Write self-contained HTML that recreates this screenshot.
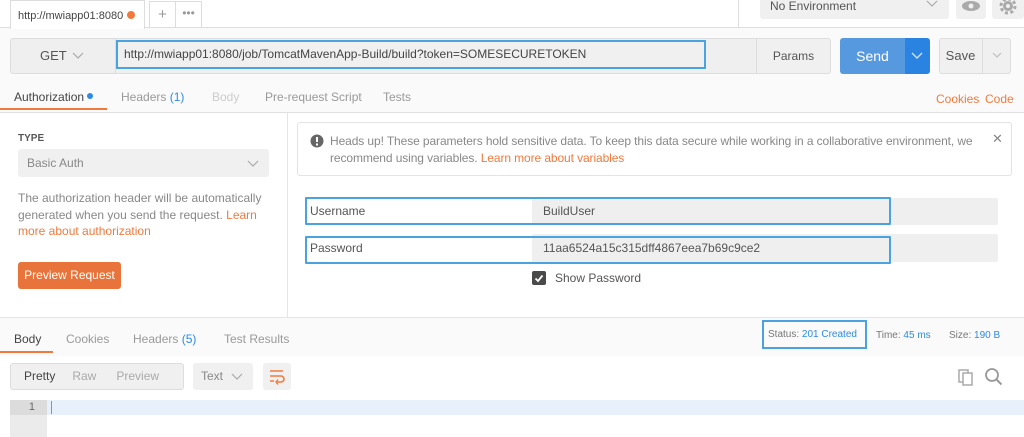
<!DOCTYPE html>
<html><head><style>
*{box-sizing:border-box;margin:0;padding:0}
body{width:1024px;height:437px;overflow:hidden;background:#fafafa;font-family:"Liberation Sans",sans-serif;font-size:12px;color:#505050;position:relative}
.a{position:absolute}
.or{color:#f07a3e}
.bl{color:#2e8ae6}
.chev{position:absolute}
</style></head><body>
<!-- top bar -->
<div class="a" style="left:0;top:0;width:1024px;height:28px;background:#fff;border-bottom:1px solid #ddd"></div>
<div class="a" style="left:10px;top:0;width:135px;height:29px;background:#fff;border:1px solid #ddd;border-bottom:none;font-size:11px;padding:9px 0 0 7px;color:#444">http://mwiapp01:8080</div>
<div class="a" style="left:127px;top:11px;width:8px;height:8px;border-radius:50%;background:#f07a3e;box-shadow:0 0 0 3px #fff"></div>
<div class="a" style="left:149px;top:1px;width:27px;height:27px;border:1px solid #ddd;text-align:center;line-height:26px;color:#999;font-size:15px">+</div>
<div class="a" style="left:175px;top:1px;width:27px;height:27px;border:1px solid #ddd;text-align:center;line-height:22px;color:#999;font-size:12px">•••</div>
<div class="a" style="left:738px;top:0;width:1px;height:28px;background:#ddd"></div>
<div class="a" style="left:760px;top:0;width:189px;height:19px;background:#f0f0f0;border-radius:0 0 3px 3px;padding:0 0 0 10px;font-size:12px;line-height:12px;color:#555">No Environment</div>
<svg class="chev" style="left:926px;top:0" width="12" height="8"><path d="M1 1l5 5 5-5" stroke="#aaa" stroke-width="1.2" fill="none"/></svg>
<div class="a" style="left:956px;top:0;width:30px;height:19px;background:#f0f0f0;border-radius:0 0 3px 3px"><svg width="30" height="14"><ellipse cx="15" cy="6" rx="9" ry="5" fill="#aaa"/><circle cx="15" cy="6" r="2.5" fill="#f0f0f0"/></svg></div>
<div class="a" style="left:992px;top:0;width:32px;height:19px;background:#f0f0f0;border-radius:0 0 3px 3px"><svg width="32" height="16"><circle cx="16" cy="6" r="7" fill="none" stroke="#aaa" stroke-width="3" stroke-dasharray="3 2.5"/><circle cx="16" cy="6" r="5" fill="#aaa"/><circle cx="16" cy="6" r="2" fill="#f0f0f0"/></svg></div>
<!-- request row -->
<div class="a" style="left:10px;top:38px;width:748px;height:36px;background:#efefef;border:1px solid #ddd;border-radius:3px"></div>
<div class="a" style="left:10px;top:38px;width:106px;height:36px;border-right:1px solid #ddd;font-size:13px;line-height:36px;padding-left:30px;color:#555">GET</div>
<svg class="chev" style="left:72px;top:52px" width="12" height="8"><path d="M1 1l5 5 5-5" stroke="#aaa" stroke-width="1.2" fill="none"/></svg>
<div class="a" style="left:116px;top:40px;width:590px;height:29px;border:2px solid #4aa3df;background:#f0f0f0;font-size:12px;line-height:25px;padding-left:6px;color:#444">http://mwiapp01:8080/job/TomcatMavenApp-Build/build?token=SOMESECURETOKEN</div>
<div class="a" style="left:756px;top:38px;width:75px;height:36px;background:#f0f0f0;border:1px solid #ddd;border-radius:0 3px 3px 0;text-align:center;line-height:34px;color:#555">Params</div>
<div class="a" style="left:840px;top:38px;width:65px;height:36px;background:#5799df;border-radius:3px 0 0 3px;color:#fff;font-size:14px;text-align:center;line-height:36px">Send</div>
<div class="a" style="left:905px;top:38px;width:25px;height:36px;background:#2a83e0;border-radius:0 3px 3px 0"></div>
<svg class="chev" style="left:911px;top:52px" width="12" height="8"><path d="M1 1l5 5 5-5" stroke="#cfe3f8" stroke-width="1.4" fill="none"/></svg>
<div class="a" style="left:939px;top:38px;width:72px;height:36px;background:#f0f0f0;border:1px solid #ddd;border-radius:3px"></div>
<div class="a" style="left:939px;top:38px;width:44px;height:36px;border-right:1px solid #ddd;text-align:center;line-height:36px;font-size:13px;color:#555">Save</div>
<svg class="chev" style="left:992px;top:52px" width="10" height="7"><path d="M1 1l4 4 4-4" stroke="#bbb" stroke-width="1.1" fill="none"/></svg>
<!-- tabs -->
<div class="a" style="left:14px;top:90px;color:#444">Authorization <span style="display:inline-block;width:6px;height:6px;border-radius:50%;background:#2e8ae6;vertical-align:2px"></span></div>
<div class="a" style="left:0;top:108px;width:107px;height:2px;background:#f07a3e"></div>
<div class="a" style="left:121px;top:90px;color:#999">Headers <span class="bl">(1)</span></div>
<div class="a" style="left:212px;top:90px;color:#ccc">Body</div>
<div class="a" style="left:265px;top:90px;color:#999">Pre-request Script</div>
<div class="a" style="left:383px;top:90px;color:#999">Tests</div>
<div class="a or" style="left:936px;top:92px">Cookies</div>
<div class="a or" style="left:985px;top:92px">Code</div>
<div class="a" style="left:0;top:112px;width:1024px;height:1px;background:#e0e0e0"></div>
<!-- auth panes -->
<div class="a" style="left:0;top:113px;width:1024px;height:204px;background:#fff"></div>
<div class="a" style="left:287px;top:113px;width:1px;height:204px;background:#e5e5e5"></div>
<div class="a" style="left:18px;top:133px;font-size:10px;font-weight:bold;color:#555">TYPE</div>
<div class="a" style="left:18px;top:149px;width:251px;height:28px;background:#f0f0f0;border-radius:3px;line-height:28px;padding-left:9px;color:#888">Basic Auth</div>
<svg class="chev" style="left:247px;top:160px" width="12" height="8"><path d="M1 1l5 5 5-5" stroke="#aaa" stroke-width="1.2" fill="none"/></svg>
<div class="a" style="left:18px;top:190px;width:250px;line-height:16.5px;color:#888">The authorization header will be automatically generated when you send the request. <span class="or">Learn more about authorization</span></div>
<div class="a" style="left:18px;top:262px;width:103px;height:27px;background:#e8743b;border-radius:3px;color:#fff;text-align:center;line-height:27px">Preview Request</div>
<div class="a" style="left:297px;top:122px;width:715px;height:54px;border:1px solid #e3e3e3;border-radius:3px"></div>
<svg class="a" style="left:310px;top:134px" width="14" height="14"><circle cx="7" cy="7" r="6.5" fill="#666"/><rect x="6" y="3" width="2" height="5" fill="#fff"/><rect x="6" y="9.5" width="2" height="2" fill="#fff"/></svg>
<div class="a" style="left:330px;top:133px;width:660px;line-height:16.5px;color:#888;letter-spacing:-0.1px">Heads up! These parameters hold sensitive data. To keep this data secure while working in a collaborative environment, we recommend using variables. <span class="or">Learn more about variables</span></div>
<div class="a" style="left:992px;top:131px;color:#888;font-size:13px">✕</div>
<div class="a" style="left:532px;top:198px;width:466px;height:27px;background:#efefef;border-radius:2px"></div>
<div class="a" style="left:305px;top:197px;width:586px;height:28px;border:2px solid #4aa3df;border-radius:1px"></div>
<div class="a" style="left:532px;top:199px;width:357px;height:24px;background:#efefef"></div>
<div class="a" style="left:310px;top:204px;color:#555">Username</div>
<div class="a" style="left:543px;top:204px;color:#555">BuildUser</div>
<div class="a" style="left:532px;top:234px;width:466px;height:28px;background:#efefef;border-radius:2px"></div>
<div class="a" style="left:305px;top:236px;width:586px;height:28px;border:2px solid #4aa3df;border-radius:1px"></div>
<div class="a" style="left:532px;top:238px;width:357px;height:24px;background:#efefef"></div>
<div class="a" style="left:310px;top:241px;color:#555">Password</div>
<div class="a" style="left:543px;top:241px;color:#555">11aa6524a15c315dff4867eea7b69c9ce2</div>
<div class="a" style="left:532px;top:271px;width:14px;height:14px;background:#4a4a4a;border-radius:2px"><svg width="14" height="14"><path d="M3.5 7.5 L6 10 L10.5 4.5" stroke="#fff" stroke-width="1.8" fill="none"/></svg></div>
<div class="a" style="left:555px;top:271px;color:#555">Show Password</div>
<div class="a" style="left:0;top:317px;width:1024px;height:1px;background:#e5e5e5"></div>
<!-- response -->
<div class="a" style="left:14px;top:332px;color:#444">Body</div>
<div class="a" style="left:0;top:351px;width:53px;height:2px;background:#f07a3e"></div>
<div class="a" style="left:66px;top:332px;color:#999">Cookies</div>
<div class="a" style="left:133px;top:332px;color:#999">Headers <span class="bl">(5)</span></div>
<div class="a" style="left:224px;top:332px;color:#999">Test Results</div>
<div class="a" style="left:762px;top:320px;width:105px;height:29px;border:2px solid #4aa3df;font-size:10px;line-height:25px;padding-left:4px;color:#777">Status: <span class="bl">201 Created</span></div>
<div class="a" style="left:876px;top:330px;font-size:10px;color:#777">Time: <span class="bl">45 ms</span></div>
<div class="a" style="left:949px;top:330px;font-size:10px;color:#777">Size: <span class="bl">190 B</span></div>
<div class="a" style="left:0;top:356px;width:1024px;height:81px;background:#fff"></div>
<div class="a" style="left:10px;top:363px;width:174px;height:27px;background:#f0f0f0;border:1px solid #ddd;border-radius:3px;line-height:25px;color:#aaa"><span style="color:#444;margin-left:13px">Pretty</span><span style="margin-left:17px">Raw</span><span style="margin-left:20px">Preview</span></div>
<div class="a" style="left:193px;top:363px;width:60px;height:27px;background:#f0f0f0;border-radius:3px;line-height:27px;padding-left:8px;color:#888">Text</div>
<svg class="chev" style="left:231px;top:373px" width="12" height="8"><path d="M1 1l5 5 5-5" stroke="#aaa" stroke-width="1.2" fill="none"/></svg>
<div class="a" style="left:263px;top:363px;width:28px;height:27px;background:#f0f0f0;border-radius:3px"><svg width="28" height="27"><path d="M7 8h13M7 13h11a3 3 0 0 1 0 6h-4M7 18h4" stroke="#f07a3e" stroke-width="1.6" fill="none"/><path d="M15 16.5l-2 2.5 2 2.5" stroke="#f07a3e" stroke-width="1.4" fill="none"/></svg></div>
<svg class="a" style="left:957px;top:368px" width="20" height="20"><rect x="2" y="2" width="9" height="12" fill="none" stroke="#aaa" stroke-width="1.5"/><rect x="6" y="5" width="9" height="12" fill="#fff" stroke="#aaa" stroke-width="1.5"/></svg>
<svg class="a" style="left:984px;top:367px" width="20" height="20"><circle cx="8" cy="8" r="6" fill="none" stroke="#999" stroke-width="1.8"/><path d="M12.5 12.5l5 5" stroke="#999" stroke-width="2"/></svg>
<div class="a" style="left:10px;top:400px;width:1014px;height:37px;border-top:1px solid #e5e5e5;background:#fff"></div>
<div class="a" style="left:10px;top:400px;width:1014px;height:15px;background:#e8f0fb"></div>
<div class="a" style="left:10px;top:400px;width:37px;height:37px;background:#ebebeb"></div>
<div class="a" style="left:10px;top:400px;width:37px;height:15px;background:#dcdcdc;text-align:right;padding-right:12px;font-size:11px;color:#666;line-height:15px">1</div>
<div class="a" style="left:51px;top:401px;width:1px;height:13px;background:#6a9ad8"></div>
</body></html>
